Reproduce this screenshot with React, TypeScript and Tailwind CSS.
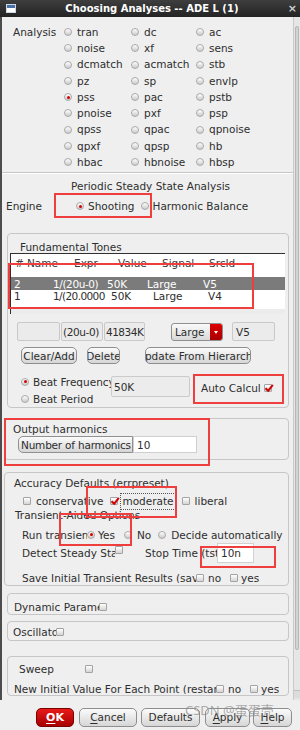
import React from "react";

const Radio = ({ on = false }: { on?: boolean }) => (
  <span className="inline-flex h-[8px] w-[8px] shrink-0 items-center justify-center rounded-full border border-[#a9a9a9] bg-linear-to-b from-[#ffffff] to-[#cbcbcb]">
    {on && <span className="h-[3px] w-[3px] rounded-full bg-[#d40000]" />}
  </span>
);

const Check = ({ on = false }: { on?: boolean }) => (
  <span className="relative inline-block h-[8px] w-[8px] shrink-0 rounded-[1px] border border-[#a3a3a3] bg-linear-to-b from-white to-[#d4d4d4]">
    {on && (
      <svg viewBox="0 0 10 10" className="absolute -left-px -top-[2px] h-[10px] w-[10px]">
        <path d="M1.5 5.2 L4.2 7.8 L8.8 1.8" stroke="#d40000" strokeWidth="2" fill="none" />
      </svg>
    )}
  </span>
);

const Opt = ({ label, on }: { label: string; on?: boolean }) => (
  <div className="flex items-center gap-[5px]">
    <Radio on={on} />
    <span>{label}</span>
  </div>
);

const Btn = ({ children, className = "" }: { children: React.ReactNode; className?: string }) => (
  <div
    className={`flex items-center justify-center overflow-hidden whitespace-nowrap rounded-[5px] border border-[#8e8e8e] bg-linear-to-b from-[#fbfbfb] to-[#d6d6d6] ${className}`}
  >
    {children}
  </div>
);

const RedBox = ({ className }: { className: string }) => (
  <div className={`pointer-events-none absolute border-2 border-[#ef3e3e] ${className}`} />
);

const rows = [
  ["tran", "dc", "ac"],
  ["noise", "xf", "sens"],
  ["dcmatch", "acmatch", "stb"],
  ["pz", "sp", "envlp"],
  ["pss", "pac", "pstb"],
  ["pnoise", "pxf", "psp"],
  ["qpss", "qpac", "qpnoise"],
  ["qpxf", "qpsp", "hb"],
  ["hbac", "hbnoise", "hbsp"],
];

export default function App() {
  return (
    <div className="relative flex h-[730px] w-[300px] flex-col overflow-hidden bg-[#efefef] font-['DejaVu_Sans',sans-serif] text-[10.5px] leading-none text-[#2e2e2e]">
      {/* title bar */}
      <div className="flex h-[17px] shrink-0 items-center bg-linear-to-b from-[#3e3e3e] to-[#242424]">
        <div className="ml-[6px] flex h-[9px] w-[10px] flex-col border border-[#cfd8e6] bg-white">
          <div className="h-[3px] bg-[#4a6fa5]" />
        </div>
        <div className="flex-1 text-center text-[10px] font-bold text-white">Choosing Analyses -- ADE L (1)</div>
        <div className="mr-[3px] text-[11px] font-bold text-[#cfcfcf]">×</div>
      </div>

      {/* scroll area */}
      <div className="flex h-[683px] shrink-0">
        <div className="w-[2px] bg-[#4c4c4c]" />

        <div className="flex min-w-0 flex-1 flex-col">
          {/* analysis */}
          <div className="grid grid-cols-[51px_67px_65px_1fr] pl-[11px] pt-[7px]">
            {rows.map((r, i) => (
              <React.Fragment key={i}>
                <div className="flex h-[16.25px] items-center">{i === 0 ? "Analysis" : ""}</div>
                <div className="flex h-[16.25px] items-center">
                  <Opt label={r[0]} on={r[0] === "pss"} />
                </div>
                <div className="flex h-[16.25px] items-center">
                  <Opt label={r[1]} />
                </div>
                <div className="flex h-[16.25px] items-center">
                  <Opt label={r[2]} />
                </div>
              </React.Fragment>
            ))}
          </div>

          <div className="mt-[2px] h-px bg-[#c6c6c6]" />
          <div className="h-px bg-white" />

          <div className="mt-[5px] flex h-[14px] items-center justify-center pl-[6px]">Periodic Steady State Analysis</div>

          <div className="mt-[4px] flex h-[18px] items-center pl-[4px]">
            <span className="w-[70px]">Engine</span>
            <Radio on />
            <span className="ml-[4px]">Shooting</span>
            <span className="ml-[6px]">
              <Radio />
            </span>
            <span className="ml-[4px]">Harmonic Balance</span>
          </div>

          {/* fundamental tones */}
          <div className="ml-[5px] mr-[4px] mt-[18px] flex h-[175px] flex-col rounded-[4px] border border-[#c6c6c6]">
            <div className="box-content flex h-[11px] items-end pl-[12px] pt-[8px] leading-[11px]">Fundamental Tones</div>
            <div className="ml-[2px] mr-[3px] flex h-[61px] flex-col border-l border-t border-[#303030] bg-white">
              <div className="flex h-[17px] items-center pl-[4px] text-[#3a3a3a]">
                <span className="w-[12px]">#</span>
                <span className="w-[47px]">Name</span>
                <span className="w-[44px]">Expr</span>
                <span className="w-[44px]">Value</span>
                <span className="w-[47px]">Signal</span>
                <span>SrcId</span>
              </div>
              <div className="h-[6px]" />
              <div className="flex h-[13px] items-center bg-[#7b7b7b] pl-[3px] text-white">
                <span className="w-[39px]">2</span>
                <span className="w-[54px] tracking-[-0.4px]">1/(20u-0)</span>
                <span className="w-[40px]">50K</span>
                <span className="w-[56px]">Large</span>
                <span>V5</span>
              </div>
              <div className="flex h-[12px] items-center pl-[3px]">
                <span className="w-[39px]">1</span>
                <span className="w-[58px] overflow-hidden whitespace-nowrap tracking-[-0.6px]">1/(20.0000</span>
                <span className="w-[42px]">50K</span>
                <span className="w-[55px]">Large</span>
                <span>V4</span>
              </div>
              <div className="flex-1" />
              <div className="h-[5px] bg-[#ececec]" />
            </div>

            <div className="mt-[8px] flex h-[19px] items-stretch">
              <div className="ml-[9px] w-[43px] rounded-[2px] border border-[#c9c9c9] bg-[#ebebeb]" />
              <div className="ml-px flex w-[42px] items-center overflow-hidden whitespace-nowrap rounded-[2px] border border-[#c9c9c9] bg-[#ebebeb] pl-px tracking-[-0.4px]">(20u-0)</div>
              <div className="ml-px flex w-[41px] items-center overflow-hidden whitespace-nowrap rounded-[2px] border border-[#c9c9c9] bg-[#ebebeb] pl-px tracking-[-0.5px]">41834K</div>
              <div className="ml-[26px] mt-px flex w-[52px] items-stretch overflow-hidden rounded-[3px] border border-[#8f8f8f] bg-linear-to-b from-[#fbfbfb] to-[#d8d8d8]">
                <span className="flex flex-1 items-center pl-[3px]">Large</span>
                <span className="flex w-[12px] items-center justify-center bg-linear-to-b from-[#e00000] to-[#a80000]">
                  <span className="h-0 w-0 border-l-[2.5px] border-r-[2.5px] border-t-[3px] border-l-transparent border-r-transparent border-t-white" />
                </span>
              </div>
              <div className="ml-[9px] flex w-[43px] items-center rounded-[2px] border border-[#c9c9c9] bg-[#ebebeb] pl-[3px]">V5</div>
            </div>

            <div className="mt-[6px] flex h-[17px]">
              <Btn className="ml-[13px] w-[56px]">Clear/Add</Btn>
              <Btn className="ml-[10px] w-[33px]">Delete</Btn>
              <Btn className="ml-[25px] w-[106px]">Update From Hierarchy</Btn>
            </div>

            <div className="mt-[9px] flex">
              <div className="w-[103px] overflow-hidden whitespace-nowrap pl-[13px]">
                <div className="flex h-[17px] items-center gap-[4px]">
                  <Radio on />
                  <span>Beat Frequency</span>
                </div>
                <div className="flex h-[17px] items-center gap-[4px]">
                  <Radio />
                  <span>Beat Period</span>
                </div>
              </div>
              <div className="mt-[3px] flex h-[21px] w-[79px] items-center rounded-[2px] border border-[#cbcbcb] bg-[#ececec] pl-[2px]">50K</div>
              <div className="ml-[11px] mt-[8px] flex h-[14px] items-center">
                <span>Auto Calcul</span>
                <span className="ml-[3px]">
                  <Check on />
                </span>
              </div>
            </div>
          </div>

          {/* output harmonics */}
          <div className="ml-[2px] mr-[4px] mt-[10px] flex h-[42px] flex-col rounded-[4px] border border-[#c6c6c6]">
            <div className="box-content flex h-[12px] items-center pl-[8px] pt-[4px]">Output harmonics</div>
            <div className="mt-px flex h-[17px]">
              <div className="ml-[13px] flex w-[115px] items-center overflow-hidden whitespace-nowrap rounded-l-[5px] border border-[#909090] bg-linear-to-b from-[#fbfbfb] to-[#d6d6d6] pl-[2px] tracking-[-0.2px]">
                Number of harmonics
              </div>
              <div className="flex w-[64px] items-center border border-[#cfcfcf] bg-white pl-[3px]">10</div>
            </div>
          </div>

          {/* accuracy */}
          <div className="ml-[2px] mr-[4px] mt-[12px] flex h-[114px] flex-col rounded-[4px] border border-[#c6c6c6]">
            <div className="box-content flex h-[12px] items-center pl-[9px] pt-[4px]">Accuracy Defaults (errpreset)</div>
            <div className="mt-[5px] flex h-[16px] items-center pl-[18px]">
              <Check />
              <span className="ml-[5px]">conservative</span>
              <span className="ml-[7px]">
                <Check on />
              </span>
              <span className="ml-[2px] border border-dotted border-[#555] px-px py-[2px]">moderate</span>
              <span className="ml-[6px]">
                <Check />
              </span>
              <span className="ml-[5px]">liberal</span>
            </div>
            <div className="flex h-[12px] items-center pl-[10px]">Transient-Aided Options</div>
            <div className="mt-[7px] flex h-[16px] items-center pl-[17px]">
              <span className="w-[65px] overflow-hidden whitespace-nowrap">Run transient</span>
              <Radio on />
              <span className="ml-[3px]">Yes</span>
              <span className="ml-[9px]">
                <Radio />
              </span>
              <span className="ml-[5px]">No</span>
              <span className="ml-[7px]">
                <Radio />
              </span>
              <span className="ml-[5px] whitespace-nowrap">Decide automatically</span>
            </div>
            <div className="mt-px flex h-[20px] items-center pl-[17px]">
              <span className="w-[93px] overflow-hidden whitespace-nowrap">Detect Steady State</span>
              <span className="mb-[6px]">
                <Check />
              </span>
              <span className="ml-[22px] w-[72px] overflow-hidden whitespace-nowrap">Stop Time (tstab)</span>
              <div className="flex h-[20px] w-[37px] items-center border border-[#d2d2d2] bg-white pl-[3px]">10n</div>
            </div>
            <div className="mt-[7px] flex h-[16px] items-center pl-[17px]">
              <span className="w-[174px] overflow-hidden whitespace-nowrap">Save Initial Transient Results (saveinit)</span>
              <Check />
              <span className="ml-[4px]">no</span>
              <span className="ml-[9px]">
                <Check />
              </span>
              <span className="ml-[3px]">yes</span>
            </div>
          </div>

          {/* dynamic */}
          <div className="ml-[5px] mr-[4px] mt-[7px] h-[22px] rounded-[4px] border border-[#c6c6c6]">
            <div className="box-content flex h-[14px] items-center pl-[6px] pt-[6px]">
              <span className="w-[85px] overflow-hidden whitespace-nowrap">Dynamic Parameters</span>
              <Check />
            </div>
          </div>

          <div className="ml-[5px] mr-[4px] mt-[6px] h-[20px] rounded-[4px] border border-[#c6c6c6]">
            <div className="box-content flex h-[14px] items-center pl-[5px] pt-[3px]">
              <span className="w-[43px] overflow-hidden whitespace-nowrap">Oscillator</span>
              <Check />
            </div>
          </div>

          {/* sweep */}
          <div className="ml-[5px] mr-[4px] mt-[15px] flex h-[40px] flex-col rounded-[4px] border border-[#c6c6c6]">
            <div className="box-content flex h-[14px] items-center pl-[11px] pt-[5px]">
              <span className="w-[66px]">Sweep</span>
              <Check />
            </div>
            <div className="mt-[7px] flex h-[14px] items-center pl-[6px]">
              <span className="w-[202px] overflow-hidden whitespace-nowrap">New Initial Value For Each Point (restart)</span>
              <Check />
              <span className="ml-[4px]">no</span>
              <span className="ml-[9px]">
                <Check />
              </span>
              <span className="ml-[3px]">yes</span>
            </div>
          </div>
        </div>

        {/* scrollbar */}
        <div className="flex w-[7px] flex-col border-l border-[#c9c9c9] bg-[#e6e6e6]">
          <div className="h-[9px]" />
          <div className="mx-px h-[624px] rounded-[2px] border border-[#b6b6b6] bg-[#d3d3d3]" />
          <div className="flex-1" />
          <div className="mb-[2px] h-[8px] border-t border-[#c0c0c0] bg-[#dcdcdc]" />
        </div>
      </div>

      {/* bottom buttons */}
      <div className="flex h-[30px] shrink-0 pt-[8px]">
        <div className="ml-[36px] flex h-[19px] w-[38px] items-center justify-center rounded-[5px] border border-[#7a0000] bg-linear-to-b from-[#e81a1a] to-[#a80000] text-[11px] font-bold text-white">
          <span className="underline underline-offset-2">O</span>K
        </div>
        <Btn className="ml-[5px] h-[19px] w-[58px]">
          <span className="underline underline-offset-2">C</span>ancel
        </Btn>
        <Btn className="ml-[4px] h-[19px] w-[59px]">Defaults</Btn>
        <Btn className="ml-[5px] h-[19px] w-[45px]">
          <span className="underline underline-offset-2">A</span>pply
        </Btn>
        <Btn className="ml-[3px] h-[19px] w-[39px]">
          <span className="underline underline-offset-2">H</span>elp
        </Btn>
      </div>

      {/* annotations */}
      <RedBox className="left-[54px] top-[193px] h-[25px] w-[98px]" />
      <RedBox className="left-[8px] top-[263px] h-[46px] w-[246px]" />
      <RedBox className="left-[193px] top-[374px] h-[30px] w-[91px]" />
      <RedBox className="left-[4px] top-[418px] h-[48px] w-[206px]" />
      <RedBox className="left-[86px] top-[486px] h-[32px] w-[91px]" />
      <RedBox className="left-[59px] top-[513px] h-[33px] w-[73px]" />
      <RedBox className="left-[200px] top-[546px] h-[22px] w-[76px]" />

      <div className="pointer-events-none absolute left-[185px] top-[704px] font-['Noto_Sans','Noto_Sans_CJK_SC',sans-serif] text-[13px] text-[#8a8a8a]/70">
        CSDN @蛋蛋壳
      </div>
    </div>
  );
}
